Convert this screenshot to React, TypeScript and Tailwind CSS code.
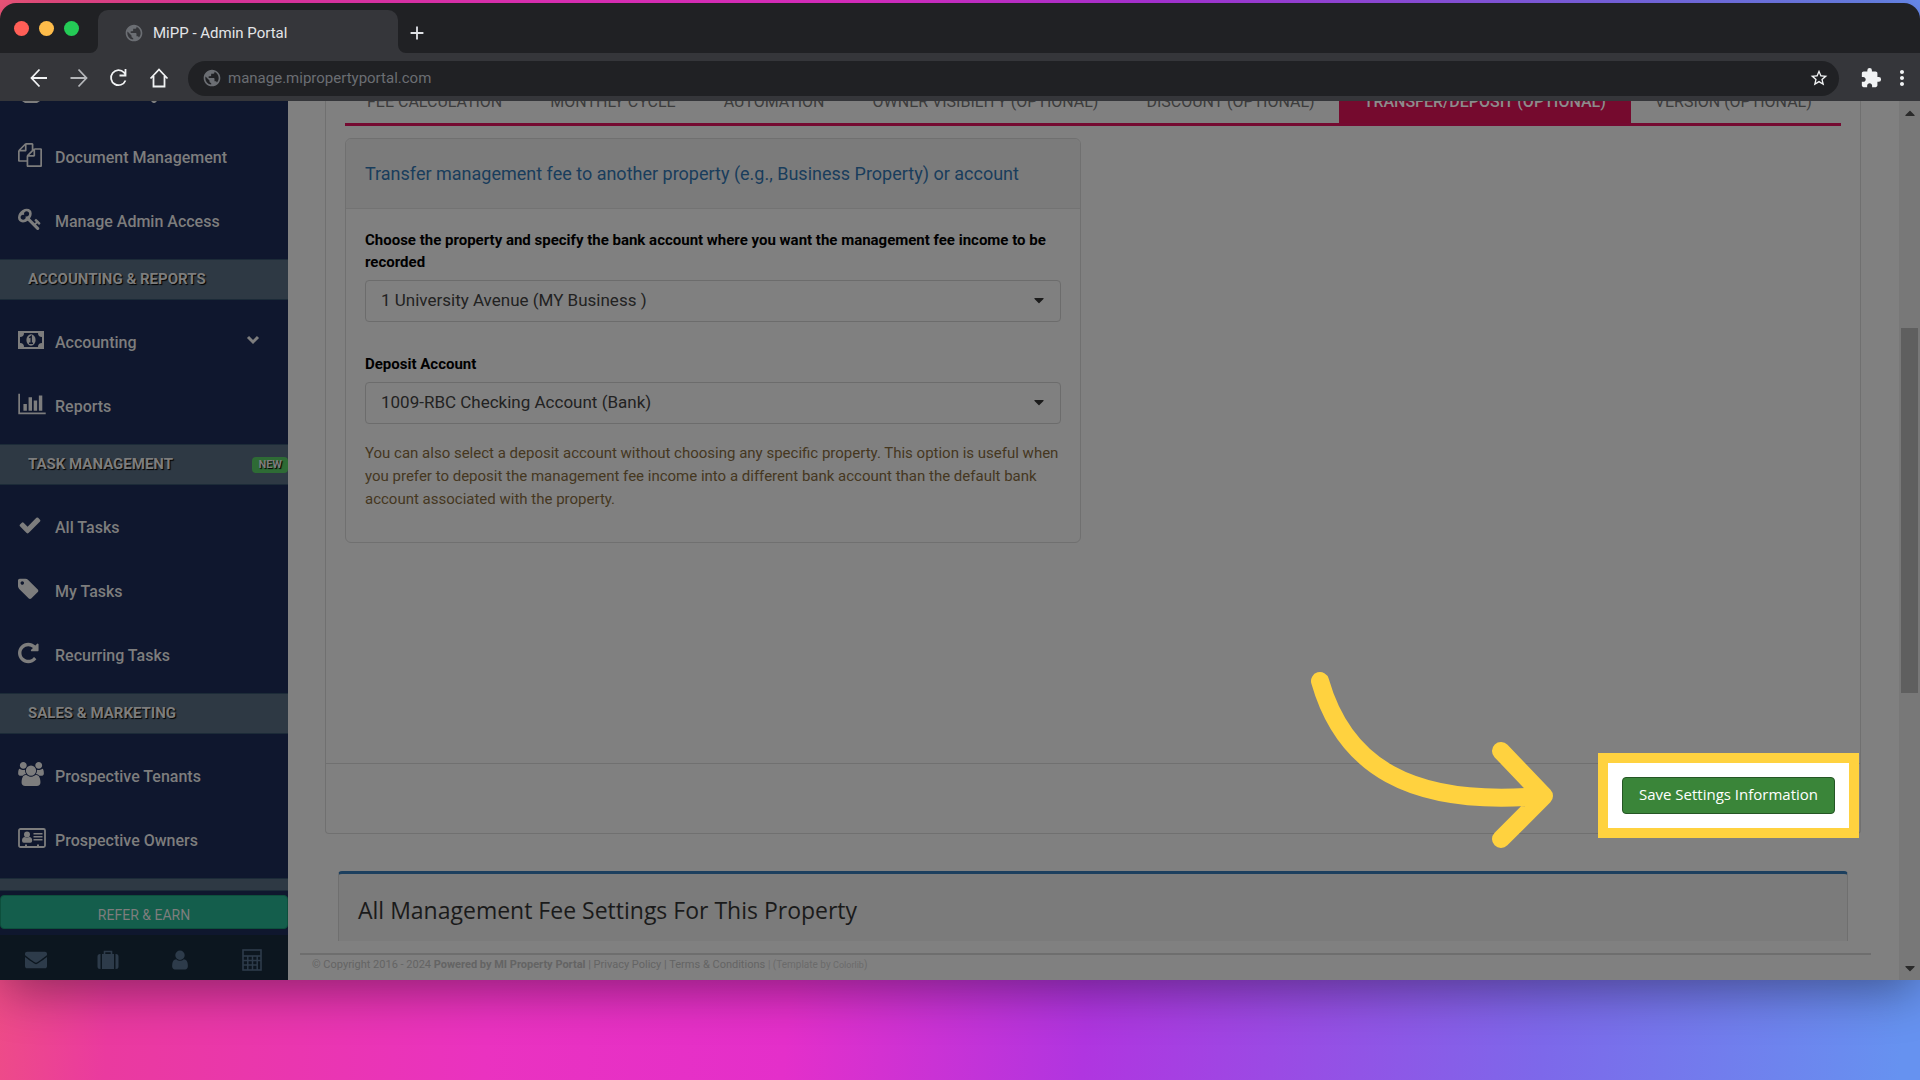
import React from "react";
import { FaEnvelope, FaCaretDown, FaCaretUp } from "react-icons/fa";
import { MdPublic, MdExtension, MdMoreVert, MdStarBorder, MdAdd } from "react-icons/md";

interface GlyphProps {
  d: string;
  box?: string;
  className?: string;
}

const Glyph = ({ d, box = "0 0 1792 1792", className = "h-6 w-6" }: GlyphProps) => (
  <svg viewBox={box} fill="currentColor" aria-hidden="true" className={className}>
    <path d={d} />
  </svg>
);

const LineIcon = ({ d }: { d: string }) => (
  <svg
    viewBox="0 0 20 20"
    fill="none"
    stroke="currentColor"
    strokeWidth="1.8"
    aria-hidden="true"
    className="h-5 w-5"
  >
    <path d={d} />
  </svg>
);

const paths = {
  files:
    "M1696 384q40 0 68 28t28 68v1216q0 40-28 68t-68 28h-960q-40 0-68-28t-28-68v-288h-544q-40 0-68-28t-28-68v-672q0-40 20-88t48-76l408-408q28-28 76-48t88-20h416q40 0 68 28t28 68v328q68-40 128-40h416zm-544 213l-299 299h299v-299zm-640-384l-299 299h299v-299zm196 647l316-316v-416h-384v416q0 40-28 68t-68 28h-416v640h512v-256q0-40 20-88t48-76zm956 804v-1152h-384v416q0 40-28 68t-68 28h-416v640h896z",
  key: "M832 512q0-80-56-136t-136-56-136 56-56 136q0 42 19 83-41-19-83-19-80 0-136 56t-56 136 56 136 136 56 136-56 56-136q0-42-19-83 41 19 83 19 80 0 136-56t56-136zm851 704q0 17-49 66t-66 49q-9 0-28.5-16t-36.5-33-38.5-40-24.5-26l-96 96 220 220q28 28 28 68 0 42-39 81t-81 39q-40 0-68-28l-671-671q-176 131-365 131-163 0-265.5-102.5t-102.5-265.5q0-160 95-313t248-248 313-95q163 0 265.5 102.5t102.5 265.5q0 189-131 365l355 355 96-96q-3-3-26-24.5t-40-38.5-33-36.5-16-28.5q0-17 49-66t66-49q13 0 23 10 6 6 46 44.5t82 79.5 86.5 86 73 78 28.5 41z",
  chart:
    "M640 896v512h-256v-512h256zm384-512v1024h-256v-1024h256zm1024 1152v128h-2048v-1536h128v1408h1920zm-640-896v768h-256v-768h256zm384-384v1152h-256v-1152h256z",
  check:
    "M1671 566q0 40-28 68l-724 724-136 136q-28 28-68 28t-68-28l-136-136-362-362q-28-28-28-68t28-68l136-136q28-28 68-28t68 28l294 295 656-657q28-28 68-28t68 28l136 136q28 28 28 68z",
  tag: "M576 448q0-53-37.5-90.5t-90.5-37.5-90.5 37.5-37.5 90.5 37.5 90.5 90.5 37.5 90.5-37.5 37.5-90.5zm1067 576q0 53-37 90l-491 492q-39 37-91 37-53 0-90-37l-715-716q-38-37-64.5-101t-26.5-117v-416q0-52 38-90t90-38h416q53 0 117 26.5t102 64.5l715 714q37 39 37 91z",
  repeat:
    "M1664 256v448q0 26-19 45t-45 19h-448q-42 0-59-40-17-39 14-69l138-138q-148-137-349-137-104 0-198.5 40.5t-163.5 109.5-109.5 163.5-40.5 198.5 40.5 198.5 109.5 163.5 163.5 109.5 198.5 40.5q119 0 225-52t179-147q7-10 23-12 15 0 25 9l137 138q9 8 9.5 20.5t-7.5 22.5q-109 132-264 204.5t-327 72.5q-156 0-298-61t-245-164-164-245-61-298 61-298 164-245 245-164 298-61q147 0 284.5 55.5t244.5 156.5l130-129q29-31 70-14 39 17 39 59z",
  users:
    "M529 896q-162 5-265 128h-134q-82 0-138-40.5t-56-118.5q0-353 124-353 6 0 43.5 21t97.5 42.5 119 21.5q67 0 133-23-5 37-5 66 0 139 81 256zm1071 637q0 120-73 189.5t-194 69.5h-874q-121 0-194-69.5t-73-189.5q0-53 3.5-103.5t14-109 26.5-108.5 43-97.5 62-81 85.5-53.5 111.5-20q10 0 43 21.5t73 48 107 48 135 21.5 135-21.5 107-48 73-48 43-21.5q61 0 111.5 20t85.5 53.5 62 81 43 97.5 26.5 108.5 14 109 3.5 103.5zm-1024-1277q0 106-75 181t-181 75-181-75-75-181 75-181 181-75 181 75 75 181zm704 384q0 159-112.5 271.5t-271.5 112.5-271.5-112.5-112.5-271.5 112.5-271.5 271.5-112.5 271.5 112.5 112.5 271.5zm576 225q0 78-56 118.5t-138 40.5h-134q-103-123-265-128 81-117 81-256 0-29-5-66 66 23 133 23 59 0 119-21.5t97.5-42.5 43.5-21q124 0 124 353zm-128-609q0 106-75 181t-181 75-181-75-75-181 75-181 181-75 181 75 75 181z",
  user: "M1536 1399q0 109-62.5 187t-150.5 78h-854q-88 0-150.5-78t-62.5-187q0-85 8.5-160.5t31.5-152 58.5-131 94-89 134.5-34.5q131 128 313 128t313-128q76 0 134.5 34.5t94 89 58.5 131 31.5 152 8.5 160.5zm-256-887q0 159-112.5 271.5t-271.5 112.5-271.5-112.5-112.5-271.5 112.5-271.5 271.5-112.5 271.5 112.5 112.5 271.5z",
};

const MoneyIcon = () => (
  <svg viewBox="0 0 26 18" aria-hidden="true" className="h-[18px] w-[26px]">
    <rect width="26" height="18" fill="currentColor" />
    <path d="M6 2h14a4 4 0 0 0 4 4v6a4 4 0 0 0-4 4H6a4 4 0 0 0-4-4V6a4 4 0 0 0 4-4z" fill="#0f172e" />
    <ellipse cx="13" cy="9" rx="4.6" ry="5.8" fill="currentColor" />
    <path d="M11.2 6.8 13.2 5.4V12M11 12.2h4" fill="none" stroke="#0f172e" strokeWidth="1.4" />
  </svg>
);

const CardIcon = () => (
  <svg viewBox="0 0 28 20" aria-hidden="true" className="h-5 w-7" fill="currentColor">
    <rect x="1" y="1" width="26" height="18" rx="1.5" fill="none" stroke="currentColor" strokeWidth="1.8" />
    <circle cx="9" cy="6.6" r="3" />
    <path d="M4 12.5q0-3.5 3-3.5 2 1.6 4 0 3.2 0 3.2 3.5 0 2.3-1.8 2.3H5.8Q4 14.8 4 12.5zM15.5 5h9v1.5h-9zM15.5 8h9v1.5h-9zM15.5 11h9v1.5h-9zM7 16.5h2V19H7zM19 16.5h2V19h-2z" />
  </svg>
);

const SuitcaseIcon = () => (
  <svg viewBox="0 0 22 20" aria-hidden="true" className="h-5 w-[22px]" fill="currentColor">
    <path d="M5 4h12v15H5zM3.5 4v15H3q-2.5 0-2.5-2.5v-10Q.5 4 3 4zM18.5 4v15h.5q2.5 0 2.5-2.5v-10Q21.5 4 19 4z" />
    <path d="M7.5 4V1.5h7V4" fill="none" stroke="currentColor" strokeWidth="1.6" />
  </svg>
);

const CalculatorIcon = () => (
  <svg viewBox="0 0 20 22" aria-hidden="true" className="h-[22px] w-5" fill="none" stroke="currentColor">
    <rect x="1" y="1" width="18" height="20" strokeWidth="1.6" />
    <path d="M1 7h18" strokeWidth="1.6" />
    <path d="M1 11.5h18M1 16h14.5M5.8 7v14M10.5 7v14M15.2 7v14" strokeWidth="1.5" />
  </svg>
);

const menu = [
  {
    title: "",
    items: [
      { label: "Document Management", icon: <Glyph d={paths.files} /> },
      { label: "Manage Admin Access", icon: <Glyph d={paths.key} /> },
    ],
  },
  {
    title: "ACCOUNTING & REPORTS",
    items: [
      { label: "Accounting", icon: <MoneyIcon />, open: true },
      { label: "Reports", icon: <Glyph d={paths.chart} box="0 0 2048 1792" className="h-6 w-7" /> },
    ],
  },
  {
    title: "TASK MANAGEMENT",
    badge: "NEW",
    items: [
      { label: "All Tasks", icon: <Glyph d={paths.check} /> },
      { label: "My Tasks", icon: <Glyph d={paths.tag} box="128 0 1792 1792" /> },
      { label: "Recurring Tasks", icon: <Glyph d={paths.repeat} box="128 0 1792 1792" /> },
    ],
  },
  {
    title: "SALES & MARKETING",
    items: [
      { label: "Prospective Tenants", icon: <Glyph d={paths.users} box="-64 0 1920 1792" className="h-6 w-[26px]" /> },
      { label: "Prospective Owners", icon: <CardIcon /> },
    ],
  },
];

const tabs = [
  "FEE CALCULATION",
  "MONTHLY CYCLE",
  "AUTOMATION",
  "OWNER VISIBILITY (OPTIONAL)",
  "DISCOUNT (OPTIONAL)",
  "TRANSFER/DEPOSIT (OPTIONAL)",
  "VERSION (OPTIONAL)",
];

const BrowserBar = () => (
  <header className="shrink-0 bg-[#202124] font-['Roboto',sans-serif]">
    <div className="flex h-[50px] items-end">
      <div className="flex w-[90px] items-center gap-[10px] self-center pl-[14px]">
        <span className="h-[15px] w-[15px] shrink-0 rounded-full bg-[#ff5f57]"></span>
        <span className="h-[15px] w-[15px] shrink-0 rounded-full bg-[#febc4a]"></span>
        <span className="h-[15px] w-[15px] shrink-0 rounded-full bg-[#24cb56]"></span>
      </div>
      <svg viewBox="0 0 8 8" aria-hidden="true" className="h-2 w-2" fill="#35363a">
        <path d="M8 0v8H0a8 8 0 0 0 8-8z" />
      </svg>
      <div className="flex h-[43px] w-[300px] items-center gap-[9px] rounded-t-[10px] bg-[#35363a] pt-[3px] pl-[26px] text-[15px] text-[#e4e5e8]">
        <MdPublic className="h-5 w-5 text-[#6b6e73]" />
        MiPP - Admin Portal
      </div>
      <svg viewBox="0 0 8 8" aria-hidden="true" className="h-2 w-2" fill="#35363a">
        <path d="M0 0v8h8a8 8 0 0 1-8-8z" />
      </svg>
      <button type="button" aria-label="New tab" className="mb-[9px] text-[#dfe1e5]">
        <MdAdd className="h-[22px] w-[22px]" />
      </button>
    </div>
    <div className="flex h-12 items-center bg-[#35363a] pt-[2px] pr-[6px] text-[#f1f3f4]">
      <div className="flex w-[188px] items-center gap-5 pl-[29px]">
        <button type="button" aria-label="Back">
          <LineIcon d="M18 10H3M10.500 1.500 2.500 10l8 8.500" />
        </button>
        <button type="button" aria-label="Forward" className="text-[#b4b6b9]">
          <LineIcon d="M1.500 10H17M9.500 1.500l8 8.500-8 8.500" />
        </button>
        <button type="button" aria-label="Reload">
          <LineIcon d="M16.500 12.500A7.500 7.500 0 1 1 15 4.500L16.500 6.500M16.500 1v6.500H10.500" />
        </button>
        <button type="button" aria-label="Home">
          <LineIcon d="M1.500 10.500 10 1.500l8.500 9M4.500 8v10.500h11V8" />
        </button>
      </div>
      <div className="flex h-[35px] min-w-0 flex-1 items-center gap-[6px] rounded-full bg-[#202124] pr-[10px] pl-[14px]">
        <MdPublic className="h-5 w-5 shrink-0 text-[#6b6e73]" />
        <input
          aria-label="Address"
          readOnly
          value="manage.mipropertyportal.com"
          className="min-w-0 flex-1 bg-transparent text-[15px] text-[#6b6e73] outline-none"
        />
        <button type="button" aria-label="Bookmark">
          <MdStarBorder className="h-5 w-5" />
        </button>
      </div>
      <button type="button" aria-label="Extensions" className="ml-[21px]">
        <MdExtension className="h-[22px] w-[22px]" />
      </button>
      <button type="button" aria-label="More" className="ml-2">
        <MdMoreVert className="h-6 w-6" />
      </button>
    </div>
  </header>
);

const Sidebar = () => (
  <aside className="flex w-72 shrink-0 flex-col bg-[#0f172e] font-['Roboto',sans-serif] text-[#7d7d7d]">
    <div className="min-h-0 flex-1 overflow-hidden">
      <svg viewBox="0 0 288 14" aria-hidden="true" className="block h-[14px] w-full" fill="currentColor">
        <path d="M22 0h18l-3 2H25zM151 0h6l-2 2h-2z" />
      </svg>
      {menu.map((section) => (
        <nav key={section.title}>
          {section.title && (
            <h2 className="flex h-[41px] items-center border-y border-[#1c2b38] bg-[#2e3944] pl-7 text-[15px] font-bold [text-shadow:1px_1px_1px_#000]">
              {section.title}
              {section.badge && (
                <span className="ml-auto rounded-sm bg-[#2e6b35] px-[6px] text-[11px] leading-4">{section.badge}</span>
              )}
            </h2>
          )}
          <ul className="py-2">
            {section.items.map((item) => (
              <li key={item.label}>
                <a href="#" className="flex h-16 items-center pr-7 pl-[18px] text-base font-medium">
                  <span className="flex w-[37px] items-center">{item.icon}</span>
                  <span className="pt-[5px]">{item.label}</span>
                  {item.open && (
                    <svg
                      viewBox="0 0 14 14"
                      aria-hidden="true"
                      className="ml-auto h-[14px] w-[14px]"
                      fill="none"
                      stroke="currentColor"
                      strokeWidth="3"
                    >
                      <path d="M2 4l5 5 5-5" />
                    </svg>
                  )}
                </a>
              </li>
            ))}
          </ul>
        </nav>
      ))}
      <div className="h-[13px] border-y border-[#1c2b38] bg-[#2e3944]"></div>
    </div>
    <a
      href="#"
      className="mb-[6px] flex h-[34px] shrink-0 items-center justify-center rounded border border-[#0d4f3c] bg-[#145e4c] text-sm"
    >
      <span className="pt-[5px]">REFER &amp; EARN</span>
    </a>
    <div className="grid h-[45px] shrink-0 grid-cols-4 items-center justify-items-center bg-[#0c161f] pt-1 text-[#2d3b4a]">
      <FaEnvelope className="h-[22px] w-[22px]" />
      <SuitcaseIcon />
      <Glyph d={paths.user} className="h-[22px] w-[22px]" />
      <CalculatorIcon />
    </div>
  </aside>
);

const SelectBox = ({ id, value }: { id: string; value: string }) => (
  <div className="relative">
    <select
      id={id}
      className="h-[42px] w-full appearance-none rounded border border-[#6c6c6c] bg-[#808080] px-[15px] text-[17px] text-[#222]"
    >
      <option>{value}</option>
    </select>
    <FaCaretDown className="pointer-events-none absolute top-3 right-[14px] h-4 w-4 text-[#1c1c1c]" />
  </div>
);

const TransferCard = () => (
  <section className="mt-3 w-[49.2%] rounded-md border border-[#707070] pb-[31px]">
    <div className="flex h-[70px] items-center rounded-t-md border-b border-[#737373] bg-[#7b7b7b] px-[19px]">
      <h3 className="text-lg text-[#193d5c]">
        Transfer management fee to another property (e.g., Business Property) or account
      </h3>
    </div>
    <div className="px-[19px] pt-5">
      <label htmlFor="property" className="mb-[7px] block text-[15px] leading-[22px] font-bold text-black">
        Choose the property and specify the bank account where you want the management fee income to be recorded
      </label>
      <SelectBox id="property" value="1 University Avenue (MY Business )" />
      <label htmlFor="deposit" className="mt-[31px] mb-[7px] block text-[15px] leading-[22px] font-bold text-black">
        Deposit Account
      </label>
      <SelectBox id="deposit" value="1009-RBC Checking Account (Bank)" />
      <p className="mt-[18px] text-[15px] leading-[23px] text-[#45371f]">
        You can also select a deposit account without choosing any specific property. This option is useful when you
        prefer to deposit the management fee income into a different bank account than the default bank account
        associated with the property.
      </p>
    </div>
  </section>
);

const Content = () => (
  <main className="relative flex min-w-0 flex-1 flex-col bg-[#808080] font-['Roboto',sans-serif]">
    <div className="mr-[38px] ml-[37px] flex h-[733px] flex-col rounded-b border border-t-0 border-[#707070]">
      <div className="flex-1 px-[19px]">
        <div role="tablist" className="flex h-[25px] items-end overflow-hidden border-b-3 border-[#750a31]">
          {tabs.map((tab) => (
            <button
              key={tab}
              type="button"
              role="tab"
              aria-selected={tab.startsWith("TRANSFER")}
              className={
                tab.startsWith("TRANSFER")
                  ? "h-12 shrink-0 bg-[#750a2e] px-[25px] pt-[6px] text-base font-medium text-[#8c8c8c]"
                  : "h-12 shrink-0 px-6 pt-[6px] text-base text-[#3c3c3c] first:pl-[22px]"
              }
            >
              {tab}
            </button>
          ))}
        </div>
        <TransferCard />
      </div>
      <div className="flex h-[70px] items-center justify-end border-t border-[#707070] pr-[25px] pb-[6px]">
        <div className="relative">
          <div className="absolute -inset-6 border-10 border-[#ffd23f] bg-white"></div>
          <button
            type="button"
            className="relative h-[37px] rounded border border-[#255625] bg-[#3a8539] px-4 pb-[2px] font-['Open_Sans',sans-serif] text-[15px] font-medium text-white"
          >
            Save Settings Information
          </button>
        </div>
      </div>
    </div>
    <section className="mr-[51px] ml-[50px] mt-[37px] h-[70px] rounded-t border border-t-3 border-b-0 border-[#6f6f6f] border-t-[#1c3f5e] bg-[#7b7b7b] pl-[19px]">
      <h2 className="pt-[18px] font-['Open_Sans',sans-serif] text-[23px] leading-9 text-[#1a1a1a]">
        All Management Fee Settings For This Property
      </h2>
    </section>
    <footer className="mt-3 mr-7 ml-3 border-t-2 border-[#6e6e6e] pl-3 text-[11px] leading-5 text-[#646464]">
      © Copyright 2016 - 2024 <strong>Powered by MI Property Portal</strong> | <a href="#">Privacy Policy</a> |{" "}
      <a href="#">Terms &amp; Conditions</a>{" "}
      <span className="text-[10px] text-[#6b6b6b]">
        | (Template by <small className="text-[9px]">Colorlib</small>)
      </span>
    </footer>
    <svg
      viewBox="0 0 250 180"
      aria-hidden="true"
      className="absolute right-[345px] bottom-[130px] h-[180px] w-[250px]"
      fill="none"
      stroke="#ffd23f"
      strokeWidth="18"
      strokeLinecap="round"
      strokeLinejoin="round"
    >
      <path d="M16 11C40 95 105 137 236 126M197 81 240 126 197 169" />
    </svg>
  </main>
);

const ScrollRail = () => (
  <div className="flex w-[21px] shrink-0 flex-col items-center bg-[#787878] text-[#2a2a2a]" aria-hidden="true">
    <FaCaretUp className="mt-1 h-4 w-4" />
    <div className="mt-[207px] h-[365px] w-[17px] bg-[#5f5f5f]"></div>
    <FaCaretDown className="mt-auto mb-1 h-4 w-4" />
  </div>
);

const App = () => {
  return (
    <div className="flex h-screen min-h-[1080px] flex-col bg-[linear-gradient(94deg,#f0567a_0%,#ea3a9f_9%,#ea32c0_28%,#e42fca_43%,#b035e0_58%,#7d68ea_81%,#6692f0_99%)] pt-[3px] pb-[100px]">
      <div className="flex min-h-0 flex-1 flex-col overflow-hidden rounded-t-2xl shadow-[0_14px_50px_-4px_rgba(0,0,0,0.4)]">
        <BrowserBar />
        <div className="flex min-h-0 flex-1">
          <Sidebar />
          <Content />
          <ScrollRail />
        </div>
      </div>
    </div>
  );
};

export default App;
